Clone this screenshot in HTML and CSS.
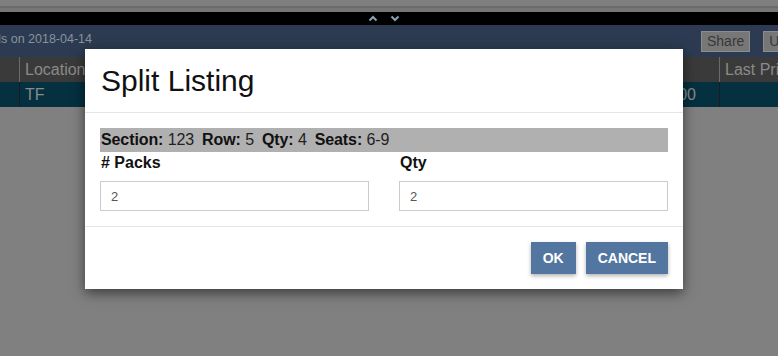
FILE: index.html
```html
<!DOCTYPE html>
<html>
<head>
<meta charset="utf-8">
<link rel="stylesheet" href="styles.css">
</head>
<body>
<div class="page">
  <div class="topstrip"><div class="band1"></div><div class="band2"></div><div class="band3"></div></div>
  <div class="blackbar">
    <svg class="chev" width="10" height="7" viewBox="0 0 10 7"><path d="M1.5 5.5 L5 2 L8.5 5.5" fill="none" stroke="#8aa3b6" stroke-width="2"/></svg>
    <svg class="chev" width="10" height="7" viewBox="0 0 10 7"><path d="M1.5 1.5 L5 5 L8.5 1.5" fill="none" stroke="#8aa3b6" stroke-width="2"/></svg>
  </div>
  <div class="navbar">
    <div class="navtitle">ds on 2018-04-14</div>
    <div class="navbtns">
      <span class="nbtn">Share</span>
      <span class="nbtn">Update</span>
    </div>
  </div>
  <div class="thead">
    <div class="c0"></div>
    <div class="c1">Location</div>
    <div class="c2">Last Price</div>
  </div>
  <div class="trow">
    <div class="c0"></div>
    <div class="c1">TF<span class="num">100.00</span></div>
    <div class="c2"></div>
  </div>
</div>

<div class="modal">
  <div class="mheader"><h4 class="mtitle">Split Listing</h4></div>
  <div class="mbody">
    <div class="info">
      <span class="grp"><b>Section:</b> 123</span>
      <span class="grp"><b>Row:</b> 5</span>
      <span class="grp"><b>Qty:</b> 4</span>
      <span class="grp"><b>Seats:</b> 6-9</span>
    </div>
    <div class="fields">
      <div class="field">
        <label class="flabel"># Packs</label>
        <input class="finput" type="text" value="2">
      </div>
      <div class="field">
        <label class="flabel">Qty</label>
        <input class="finput" type="text" value="2">
      </div>
    </div>
  </div>
  <div class="mfooter">
    <button class="btn">OK</button>
    <button class="btn">CANCEL</button>
  </div>
</div>
</body>
</html>
```
FILE: styles.css
```css
* { box-sizing: border-box; }
html, body { margin: 0; padding: 0; }
body {
  width: 778px;
  height: 356px;
  overflow: hidden;
  background: #808080;
  font-family: "Liberation Sans", Arial, sans-serif;
  position: relative;
}
.page { width: 778px; overflow: hidden; }
.topstrip { height: 12px; display: flex; flex-direction: column; }
.band1 { height: 6px; background: #7f7f7f; }
.band2 { height: 2px; background: #6b6b6b; }
.band3 { height: 4px; background: #767676; }
.blackbar {
  height: 13px;
  background: #000;
  display: flex;
  align-items: center;
  padding-left: 368px;
  gap: 12px;
}
.chev { display: block; }
.navbar {
  height: 32px;
  background: #2c3b51;
  display: flex;
  overflow: hidden;
}
.navtitle {
  flex: 0 0 707px;
  color: #8a929c;
  font-size: 12.5px;
  margin-left: -6px;
  padding-top: 6px;
  line-height: 16px;
  white-space: nowrap;
}
.navbtns { flex: 0 0 auto; display: flex; gap: 13px; padding-top: 6px; align-items: flex-start; }
.nbtn {
  height: 21px;
  padding: 0 5px;
  background: #777;
  border: 1px solid #8c8c8c;
  color: #383838;
  font-size: 14px;
  line-height: 19px;
  white-space: nowrap;
}
.thead, .trow { display: flex; height: 25px; }
.thead { background: #3a3a3a; }
.trow { background: #04303f; }
.c0 { width: 20px; border-right: 1px solid #6a6a6a; }
.c1 { width: 700px; border-right: 1px solid #6a6a6a; padding-left: 5px; }
.c2 { flex: 1; padding-left: 5px; }
.trow .c0, .trow .c1 { border-right-color: #1b1b1b; }
.thead div, .trow div {
  color: #8a8a8a;
  font-size: 16px;
  line-height: 25px;
  white-space: nowrap;
  overflow: hidden;
}
.trow .c1 { display: flex; justify-content: space-between; padding-right: 23px; }
.num { display: block; }

.modal {
  position: absolute;
  left: 85px;
  top: 49px;
  width: 598px;
  height: 240px;
  background: #fff;
  box-shadow: 0 4px 12px rgba(0,0,0,0.55);
}
.mheader {
  padding: 15px 16px;
  border-bottom: 1px solid #e5e5e5;
}
.mtitle {
  margin: 0;
  font-size: 30px;
  font-weight: normal;
  line-height: 33px;
  color: #111;
}
.mbody { padding: 15px; }
.info {
  background: #b0b0b0;
  height: 24px;
  line-height: 24px;
  padding-left: 1px;
  font-size: 16px;
  letter-spacing: -0.1px;
  color: #222;
  display: flex;
  gap: 8px;
  white-space: nowrap;
}
.info b { color: #111; }
.fields {
  display: grid;
  grid-template-columns: 1fr 1fr;
  column-gap: 30px;
}
.field { display: flex; flex-direction: column; }
.flabel {
  font-size: 16px;
  font-weight: bold;
  line-height: 22px;
  color: #111;
  padding-left: 1px;
  margin-bottom: 7px;
}
.finput {
  height: 30px;
  border: 1px solid #ccc;
  padding: 0 10px;
  font-family: "Liberation Sans", Arial, sans-serif;
  font-size: 13px;
  color: #555;
  outline: none;
  margin: 0;
}
.mfooter {
  border-top: 1px solid #e5e5e5;
  padding: 15px;
  display: flex;
  justify-content: flex-end;
  gap: 10px;
}
.btn {
  height: 32px;
  padding: 0 12px;
  border: none;
  background: #5276a0;
  color: #fff;
  font-family: "Liberation Sans", Arial, sans-serif;
  font-size: 14px;
  font-weight: bold;
  box-shadow: 0 2px 4px rgba(0,0,0,0.3);
  margin: 0;
}
```
